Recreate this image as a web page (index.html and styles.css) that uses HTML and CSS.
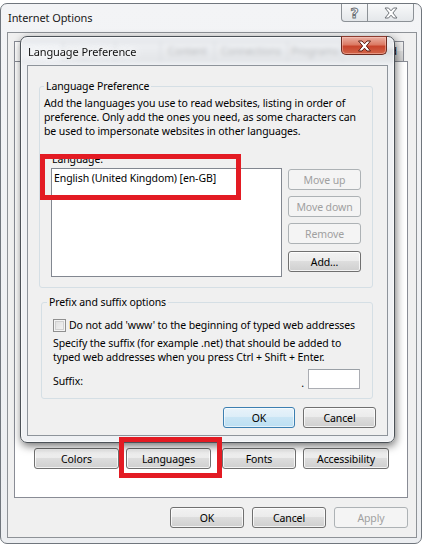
FILE: index.html
```html
<!DOCTYPE html>
<html>
<head>
<meta charset="utf-8">
<title>Internet Options</title>
<link rel="stylesheet" href="styles.css">
</head>
<body>
<div class="desk">
  <div class="win">
    <div class="titlebar">
      <span class="title">Internet Options</span>
      <div class="caps">
        <span class="cap help">?</span>
        <span class="cap close">
          <svg width="14" height="12" viewBox="0 0 14 12"><polygon points="1,1 4.5,1 7,3.8 9.5,1 13,1 8.9,6 13,11 9.5,11 7,8.2 4.5,11 1,11 5.1,6" fill="#fff" stroke="#6e7378" stroke-width="1"/></svg>
        </span>
      </div>
    </div>
    <div class="client">
      <div class="tabs">
        <span class="tab sel t1"></span>
        <span class="tab t2"></span>
        <span class="tab t3"></span>
        <span class="tab t4">Content</span>
        <span class="tab t5">Connections</span>
        <span class="tab t6">Programs</span>
        <span class="tab t7">Advanced</span>
      </div>
      <div class="panel">
        <div class="approw">
          <button class="btn b-colors">Colors</button>
          <button class="btn b-lang">Languages</button>
          <button class="btn b-fonts">Fonts</button>
          <button class="btn b-acc">Accessibility</button>
        </div>
      </div>
      <div class="footer">
        <button class="btn fbtn">OK</button>
        <button class="btn fbtn">Cancel</button>
        <button class="btn fbtn dis">Apply</button>
      </div>
    </div>
  </div>

  <div class="dlg">
    <div class="dtitle">
      <span class="dtext">Language Preference</span>
      <span class="dclose">
        <svg width="15" height="12" viewBox="0 0 15 12"><polygon points="1.5,1 5,1 7.5,3.8 10,1 13.5,1 9.4,6 13.5,11 10,11 7.5,8.2 5,11 1.5,11 5.6,6" fill="#fff" stroke="#5b1c12" stroke-width="1"/></svg>
      </span>
    </div>
    <div class="dclient">
      <fieldset class="grp g1">
        <legend>Language Preference</legend>
        <p class="desc">Add the languages you use to read websites, listing in order of<br>preference. Only add the ones you need, as some characters can<br>be used to impersonate websites in other languages.</p>
        <div class="lbl">Language:</div>
        <div class="listrow">
          <div class="listbox"><div class="item">English (United Kingdom) [en-GB]</div></div>
          <div class="side">
            <button class="btn sbtn dis s1">Move up</button>
            <button class="btn sbtn dis s2">Move down</button>
            <button class="btn sbtn dis s3">Remove</button>
            <button class="btn sbtn s4">Add...</button>
          </div>
        </div>
      </fieldset>
      <fieldset class="grp g2">
        <legend>Prefix and suffix options</legend>
        <div class="chkrow"><span class="chk"></span><span>Do not add 'www' to the beginning of typed web addresses</span></div>
        <p class="desc2">Specify the suffix (for example .net) that should be added to<br>typed web addresses when you press Ctrl + Shift + Enter.</p>
        <div class="sufrow">
          <span class="suflbl">Suffix:</span>
          <span class="dot">.</span>
          <span class="input"></span>
        </div>
      </fieldset>
      <div class="dfoot">
        <button class="btn def dok">OK</button>
        <button class="btn dcancel">Cancel</button>
      </div>
    </div>
  </div>

  <div class="mark mark1"></div>
  <div class="mark mark2"></div>
</div>
</body>
</html>
```

FILE: styles.css
```css
* { box-sizing: border-box; }
html, body { margin: 0; padding: 0; background: #ffffff; }
body { font-family: "Noto Sans", "Open Sans", sans-serif; font-size: 10.5px; letter-spacing: -0.1px; color: #000; }

/* ---------- buttons (base) ---------- */
.btn {
  font-family: inherit; font-size: 10.5px; letter-spacing: -0.1px; color: #000;
  height: 21px; padding: 0; margin: 0;
  border: 1px solid #707070; border-radius: 3px;
  background: linear-gradient(#f2f2f2, #ebebeb 49%, #dddddd 50%, #cfcfcf);
  box-shadow: inset 0 0 0 1px rgba(255,255,255,0.75);
  line-height: 18px; text-align: center;
}
.btn.dis {
  color: #a0a0a0; border-color: #adb2b5; background: #f4f4f4; box-shadow: none;
}
.btn.def {
  border-color: #3c7fb1;
  background: linear-gradient(#e8f3fa, #dcedf8 49%, #c9e5f5 50%, #bcdff2);
  box-shadow: inset 0 0 0 1px rgba(255,255,255,0.6);
}

.desk { position: relative; width: 427px; height: 552px; overflow: hidden; background: #fff; }

/* ---------- outer window ---------- */
.win {
  position: absolute; left: 0; top: 3px;
  width: 422px; height: 541px;
  border: 1px solid #70767d; border-radius: 7px;
  background: linear-gradient(#f3f4f6, #eceef1);
  padding: 0 4px 5px 6px;
  display: flex; flex-direction: column;
}
.titlebar { height: 28px; display: flex; align-items: flex-start; flex: none; }
.title { margin-left: 1px; padding-top: 6px; font-size: 11px; line-height: 15px; color: #1a1a1a; }
.caps { margin-left: auto; margin-right: 3px; display: flex; height: 18px; }
.cap {
  height: 18px; border: 1px solid #8c9196; border-top: none;
  background: linear-gradient(#f8f9fa, #e4e7ea);
  display: flex; align-items: center; justify-content: center;
}
.help {
  width: 27px; border-radius: 0 0 0 4px;
  font-family: "DejaVu Sans", sans-serif; font-weight: bold; font-size: 14px;
  color: #fff; -webkit-text-stroke: 1px #6e7378; line-height: 16px;
}
.close { width: 46px; border-left: none; border-radius: 0 0 4px 0; }

.client {
  flex: 1; border: 1px solid #8e9297; background: #f0f0f0;
  display: flex; flex-direction: column;
}
.tabs { display: flex; margin: 8px 0 0 6px; height: 20px; flex: none; }
.tab {
  height: 20px; border: 1px solid #898c95; border-bottom: none; margin-right: -1px;
  background: linear-gradient(#f2f2f2, #ebebeb 50%, #dddddd 50%, #cfcfcf);
  line-height: 18px; text-align: center; color: #000; white-space: nowrap; overflow: hidden;
}
.tab.sel { background: #fff; }
.t1 { width: 49px; } .t2 { width: 54px; } .t3 { width: 46px; } .t4 { width: 55px; }
.t5 { width: 74px; } .t6 { width: 56px; } .t7 { width: 62px; }

.panel {
  margin-left: 6px; width: 394px; height: 437px; flex: none;
  border: 1px solid #898c95; background: #fff;
}
.approw { display: flex; margin-top: 386px; padding-left: 19px; }
.approw .b-colors { width: 85px; }
.approw .b-lang { width: 85px; margin-left: 7px; }
.approw .b-fonts { width: 74px; margin-left: 11px; }
.approw .b-acc { width: 86px; margin-left: 7px; }

.footer { display: flex; justify-content: flex-end; gap: 8px; margin-top: 9px; padding-right: 8px; }
.footer .fbtn { width: 74px; }

/* ---------- dialog ---------- */
.dlg {
  position: absolute; left: 20px; top: 36px;
  width: 375px; height: 407px;
  border: 1px solid #4c5258; border-radius: 7px;
  background: rgba(234,237,241,0.78);
  backdrop-filter: blur(2px);
  -webkit-backdrop-filter: blur(2px);
  box-shadow: 1px 3px 9px rgba(0,0,0,0.55), inset 0 0 0 1px rgba(255,255,255,0.6);
  padding: 0 6px 6px 6px;
  display: flex; flex-direction: column;
}
.dtitle { height: 28px; display: flex; align-items: flex-start; flex: none; }
.dtext {
  margin-left: 1px; padding-top: 7px; font-size: 11px; line-height: 15px; color: #111;
  text-shadow: 0 0 6px #fff, 0 0 10px #fff;
}
.dclose {
  margin-left: auto; margin-right: 1px; margin-top: -1px;
  width: 46px; height: 19px;
  border: 1px solid #6a2a20; border-top-color: #8a3a2e; border-radius: 0 0 5px 5px;
  background: linear-gradient(#eab0a3, #dc7a64 45%, #c8442c 55%, #d2654a);
  box-shadow: inset 0 0 0 1px rgba(255,210,200,0.45);
  display: flex; align-items: center; justify-content: center;
}
.dclient {
  flex: 1; border: 1px solid #8e949b; background: #f0f0f0;
  display: flex; flex-direction: column;
}

.grp {
  border: 1px solid #d5dfe5; border-radius: 3px;
  margin: 0; padding: 0; min-width: 0;
}
.grp legend { padding: 0 2px; line-height: 15px; color: #000; }
.g1 { margin: 13px 0 0 11px; width: 334px; padding: 0 0 10px 4px; }
.desc { margin: 2px 0 0 0; line-height: 14px; white-space: nowrap; }
.lbl { margin: 14px 0 0 8px; line-height: 14px; }
.listrow { display: flex; margin-top: 2px; }
.listbox {
  margin-left: 7px; width: 231px; height: 109px; flex: none;
  border: 1px solid #828790; background: #fff; padding: 2px 0 0 2px;
}
.item { line-height: 14px; white-space: nowrap; }
.side { margin-left: 6px; display: flex; flex-direction: column; }
.side .sbtn { width: 73px; }
.side .s1 { margin-top: 1px; }
.side .s2 { margin-top: 6px; }
.side .s3 { margin-top: 6px; }
.side .s4 { margin-top: 7px; }

.g2 { margin: 7px 0 0 13px; width: 332px; padding: 0 12px 9px 11px; }
.g2 legend { margin-left: -6px; }
.chkrow { display: flex; align-items: center; margin-top: 8px; height: 14px; white-space: nowrap; }
.chk {
  width: 13px; height: 13px; flex: none; margin-right: 3px;
  border: 1px solid #8f8f8f;
  background: linear-gradient(135deg, #dcdcdc, #f6f6f6);
  box-shadow: inset 0 0 0 1px #f4f4f4, inset 0 0 0 2px #d0d0d0;
}
.desc2 { margin: 5px 0 0 0; line-height: 13.5px; white-space: nowrap; }
.sufrow { display: flex; align-items: center; margin-top: 5px; height: 20px; }
.suflbl { flex: 1; padding-top: 3px; line-height: 14px; }
.dot { margin-right: 4px; padding-top: 8px; line-height: 14px; }
.input { width: 52px; height: 20px; flex: none; border: 1px solid #abadb3; border-top-color: #9aa0a6; background: #fff; }

.dfoot { display: flex; justify-content: flex-end; margin-top: 8px; padding-right: 11px; }
.dfoot .dok { width: 72px; }
.dfoot .dcancel { width: 73px; margin-left: 8px; }

/* ---------- annotations ---------- */
.mark { position: absolute; border: 5px solid #e31b23; }
.mark1 { left: 40px; top: 154px; width: 201px; height: 46px; }
.mark2 { left: 119px; top: 437px; width: 103px; height: 41px; }
```
